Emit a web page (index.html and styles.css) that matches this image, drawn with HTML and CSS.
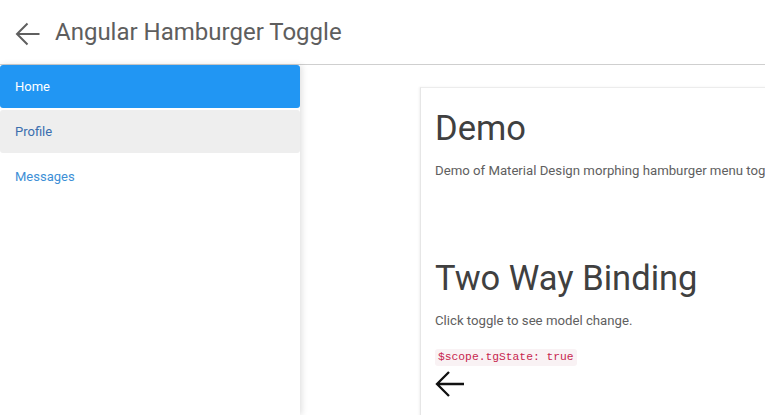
FILE: index.html
```html
<!DOCTYPE html>
<html>
<head>
<meta charset="utf-8">
<link rel="stylesheet" href="styles.css">
</head>
<body>
<header class="toolbar">
  <svg class="back" width="25" height="24" viewBox="0 0 25 24"><path d="M24.5 12H2M12.5 1.5L2 12L12.5 22.5" fill="none" stroke="#5f5f5f" stroke-width="2"/></svg>
  <h1 class="title">Angular Hamburger Toggle</h1>
</header>
<div class="layout">
  <nav class="sidebar">
    <a class="nav-item active">Home</a>
    <a class="nav-item hover">Profile</a>
    <a class="nav-item">Messages</a>
  </nav>
  <main class="main">
    <section class="card">
      <h2 class="heading">Demo</h2>
      <p class="text">Demo of Material Design morphing hamburger menu toggle for Angular Material.</p>
      <h2 class="heading second">Two Way Binding</h2>
      <p class="text">Click toggle to see model change.</p>
      <code class="code">$scope.tgState: true</code>
      <svg class="toggle" width="30" height="28" viewBox="0 0 30 28"><path d="M29 14H2M14 2L2 14L14 26" fill="none" stroke="#111" stroke-width="2.3"/></svg>
    </section>
  </main>
</div>
</body>
</html>
```

FILE: styles.css
```css
html, body {
  margin: 0;
  padding: 0;
  height: 100%;
  overflow: hidden;
  background: #fff;
  font-family: Roboto, "Noto Sans", sans-serif;
}
.toolbar {
  height: 64px;
  display: flex;
  align-items: center;
  padding-left: 15px;
  border-bottom: 1px solid #cfcfcf;
  box-sizing: content-box;
}
.back {
  display: block;
  margin-right: 15px;
  margin-top: 4px;
}
.title {
  margin: 0;
  font-size: 24px;
  font-weight: 400;
  color: #5e5e5e;
}
.layout {
  display: flex;
  height: 350px;
}
.sidebar {
  width: 300px;
  flex: none;
  background: #fff;
  box-shadow: 2px 0 6px rgba(0,0,0,0.12);
  display: flex;
  flex-direction: column;
  gap: 2px;
  position: relative;
  z-index: 1;
}
.nav-item {
  height: 43px;
  display: flex;
  align-items: center;
  padding-left: 15px;
  font-size: 13px;
  color: #3d8fd6;
  border-radius: 3px;
}
.nav-item.active {
  background: #2196f3;
  color: #fff;
}
.nav-item.hover {
  background: #eeeeee;
  color: #3a6fae;
}
.main {
  flex: 1;
  padding: 22px 0 0 120px;
  overflow: hidden;
}
.card {
  width: 600px;
  height: 400px;
  background: #fff;
  border-left: 1px solid #e6e6e6;
  border-top: 1px solid #ececec;
  box-shadow: -1px 0 2px rgba(0,0,0,0.06);
  padding: 0 14px;
  box-sizing: border-box;
}
.heading {
  margin: 0;
  padding-top: 20px;
  font-size: 34.5px;
  font-weight: 400;
  color: #404040;
  line-height: 40px;
}
.heading.second {
  padding-top: 80px;
}
.text {
  margin: 15px 0 0;
  font-size: 13.2px;
  color: #606060;
  white-space: nowrap;
}
.code {
  display: inline-block;
  margin-top: 21px;
  padding: 2px 3px 3px;
  background: #f9f2f4;
  color: #c7254e;
  font-family: "Liberation Mono", monospace;
  font-size: 11.3px;
  border-radius: 3px;
}
.toggle {
  display: block;
  margin-top: 4px;
}
```
